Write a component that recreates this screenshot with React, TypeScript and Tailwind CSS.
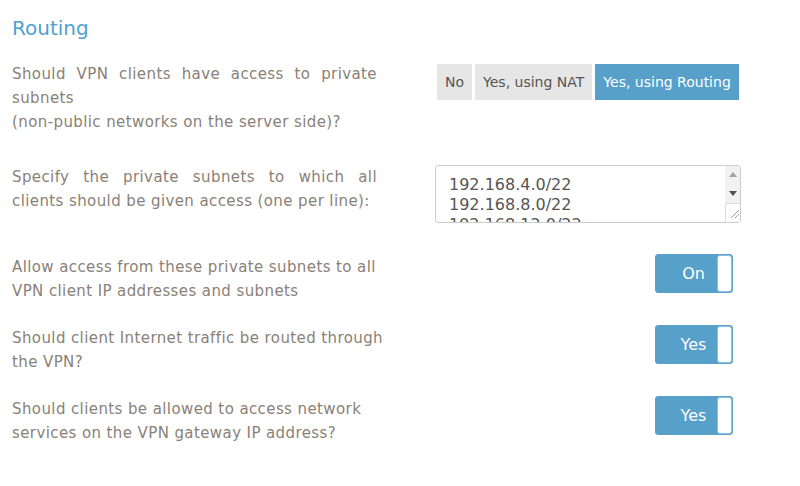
import React from "react";

const labelCls = "text-[15px] leading-[24px] tracking-[0.4px] text-[#8a8178]";

function Toggle({ label }: { label: string }) {
  return (
    <div className="flex h-[39px] w-[78px] items-stretch overflow-hidden rounded-[3px] border border-[#5aa2cb] bg-[#56a0ca]">
      <div className="flex flex-1 items-center justify-center pl-[14px] text-[16px] text-white">{label}</div>
      <div className="w-[15px] rounded-[3px] border border-[#8fc0dc] bg-white" />
    </div>
  );
}

function ToggleRow({ text, label }: { text: string; label: string }) {
  return (
    <div className="flex items-start">
      <div className={`${labelCls} w-[392px] pt-[1px]`}>{text}</div>
      <div className="ml-[251px]">
        <Toggle label={label} />
      </div>
    </div>
  );
}

export default function App() {
  return (
    <div className="min-h-[486px] w-[800px] bg-white pl-[12px] pt-[13px]" style={{ fontFamily: '"DejaVu Sans", Verdana, sans-serif' }}>
      <h2 className="text-[20px] leading-[30px] text-[#4f9fd0]">Routing</h2>

      <div className="mt-[19px] flex">
        <div className={`${labelCls} w-[365px] text-justify`}>
          Should VPN clients have access to private subnets
          <br />
          (non-public networks on the server side)?
        </div>
        <div className="ml-[60px] flex h-[36px] gap-[3px] mt-[2px] text-[14px]">
          <button className="h-[36px] bg-[#e6e6e6] px-[8px] text-[#555]">No</button>
          <button className="h-[36px] bg-[#e6e6e6] px-[8px] text-[#555]">Yes, using NAT</button>
          <button className="h-[36px] bg-[#56a0ca] px-[8px] text-white">Yes, using Routing</button>
        </div>
      </div>

      <div className="mt-[31px] flex">
        <div className={`${labelCls} w-[365px] text-justify`}>
          Specify the private subnets to which all clients should be given access (one per line):
        </div>
        <div className="relative ml-[58px] h-[58px] w-[306px]">
          <textarea
            className="block h-[58px] w-[306px] resize-none overflow-hidden rounded-[3px] border border-[#cccccc] pl-[13px] pr-[18px] pt-[9px] text-[16px] leading-[20px] text-[#555] outline-none"
            defaultValue={"192.168.4.0/22\n192.168.8.0/22\n192.168.12.0/22\n192.168.16.0/22"}
          />
          <div className="absolute bottom-[1px] right-[1px] top-[1px] flex w-[15px] flex-col bg-[#f1f1f1]">
            <div className="flex h-[17px] items-center justify-center">
              <svg width="8" height="5" viewBox="0 0 8 5"><path d="M0 5 L4 0 L8 5 Z" fill="#a3a3a3" /></svg>
            </div>
            <div className="flex h-[20px] items-center justify-center">
              <svg width="8" height="5" viewBox="0 0 8 5"><path d="M0 0 L4 5 L8 0 Z" fill="#505050" /></svg>
            </div>
            <div className="flex-1 border-l border-t border-[#dcdcdc] bg-white">
              <svg width="14" height="15" viewBox="0 0 14 15">
                <path d="M5 14 L13 6 M9 14 L13 10" stroke="#a0a0a0" strokeWidth="1" />
              </svg>
            </div>
          </div>
        </div>
      </div>

      <div className="mt-[31px] flex flex-col gap-[22px]">
        <ToggleRow text="Allow access from these private subnets to all VPN client IP addresses and subnets" label="On" />
        <ToggleRow text="Should client Internet traffic be routed through the VPN?" label="Yes" />
        <ToggleRow text="Should clients be allowed to access network services on the VPN gateway IP address?" label="Yes" />
      </div>
    </div>
  );
}
